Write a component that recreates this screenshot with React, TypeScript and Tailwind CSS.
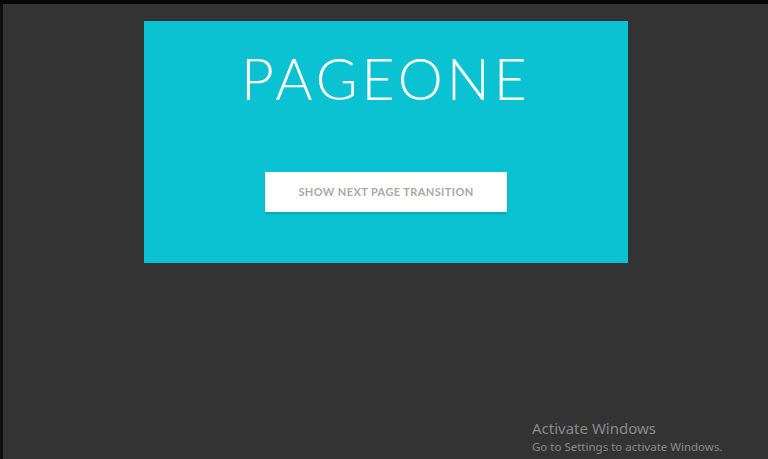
export default function App() {
  return (
    <div className="relative flex h-[459px] w-full flex-col overflow-hidden bg-[#333333]">
      {/* window top edge */}
      <div className="h-1 w-full bg-[#070707]" />

      <div className="flex flex-1">
        <div className="w-[3px] bg-[#0f0f0f]" />

        <main className="flex-1">
          <section className="ml-[141px] mt-[17px] flex h-[242px] w-[484px] flex-col items-center bg-[#0bc2d3]">
            <h1
              className="mt-[29px] text-[57px] font-light leading-none tracking-[4px] text-white"
              style={{ fontFamily: "Lato, sans-serif" }}
            >
              PAGEONE
            </h1>

            <button
              className="mt-[65px] h-10 w-[242px] bg-white text-[11px] font-bold tracking-[0.4px] text-[#a9a9a9] shadow-[0_2px_2px_rgba(0,0,0,0.15)]"
              style={{ fontFamily: "Lato, sans-serif" }}
            >
              SHOW NEXT PAGE TRANSITION
            </button>
          </section>
        </main>
      </div>

      {/* windows activation watermark */}
      <div
        className="pointer-events-none absolute left-[532px] top-[418px] text-[#8a8a8a]"
        style={{ fontFamily: '"Noto Sans", sans-serif' }}
      >
        <p className="text-[15px] leading-[20px]">Activate Windows</p>
        <p className="text-[11.5px] leading-[17px]">Go to Settings to activate Windows.</p>
      </div>
    </div>
  );
}
